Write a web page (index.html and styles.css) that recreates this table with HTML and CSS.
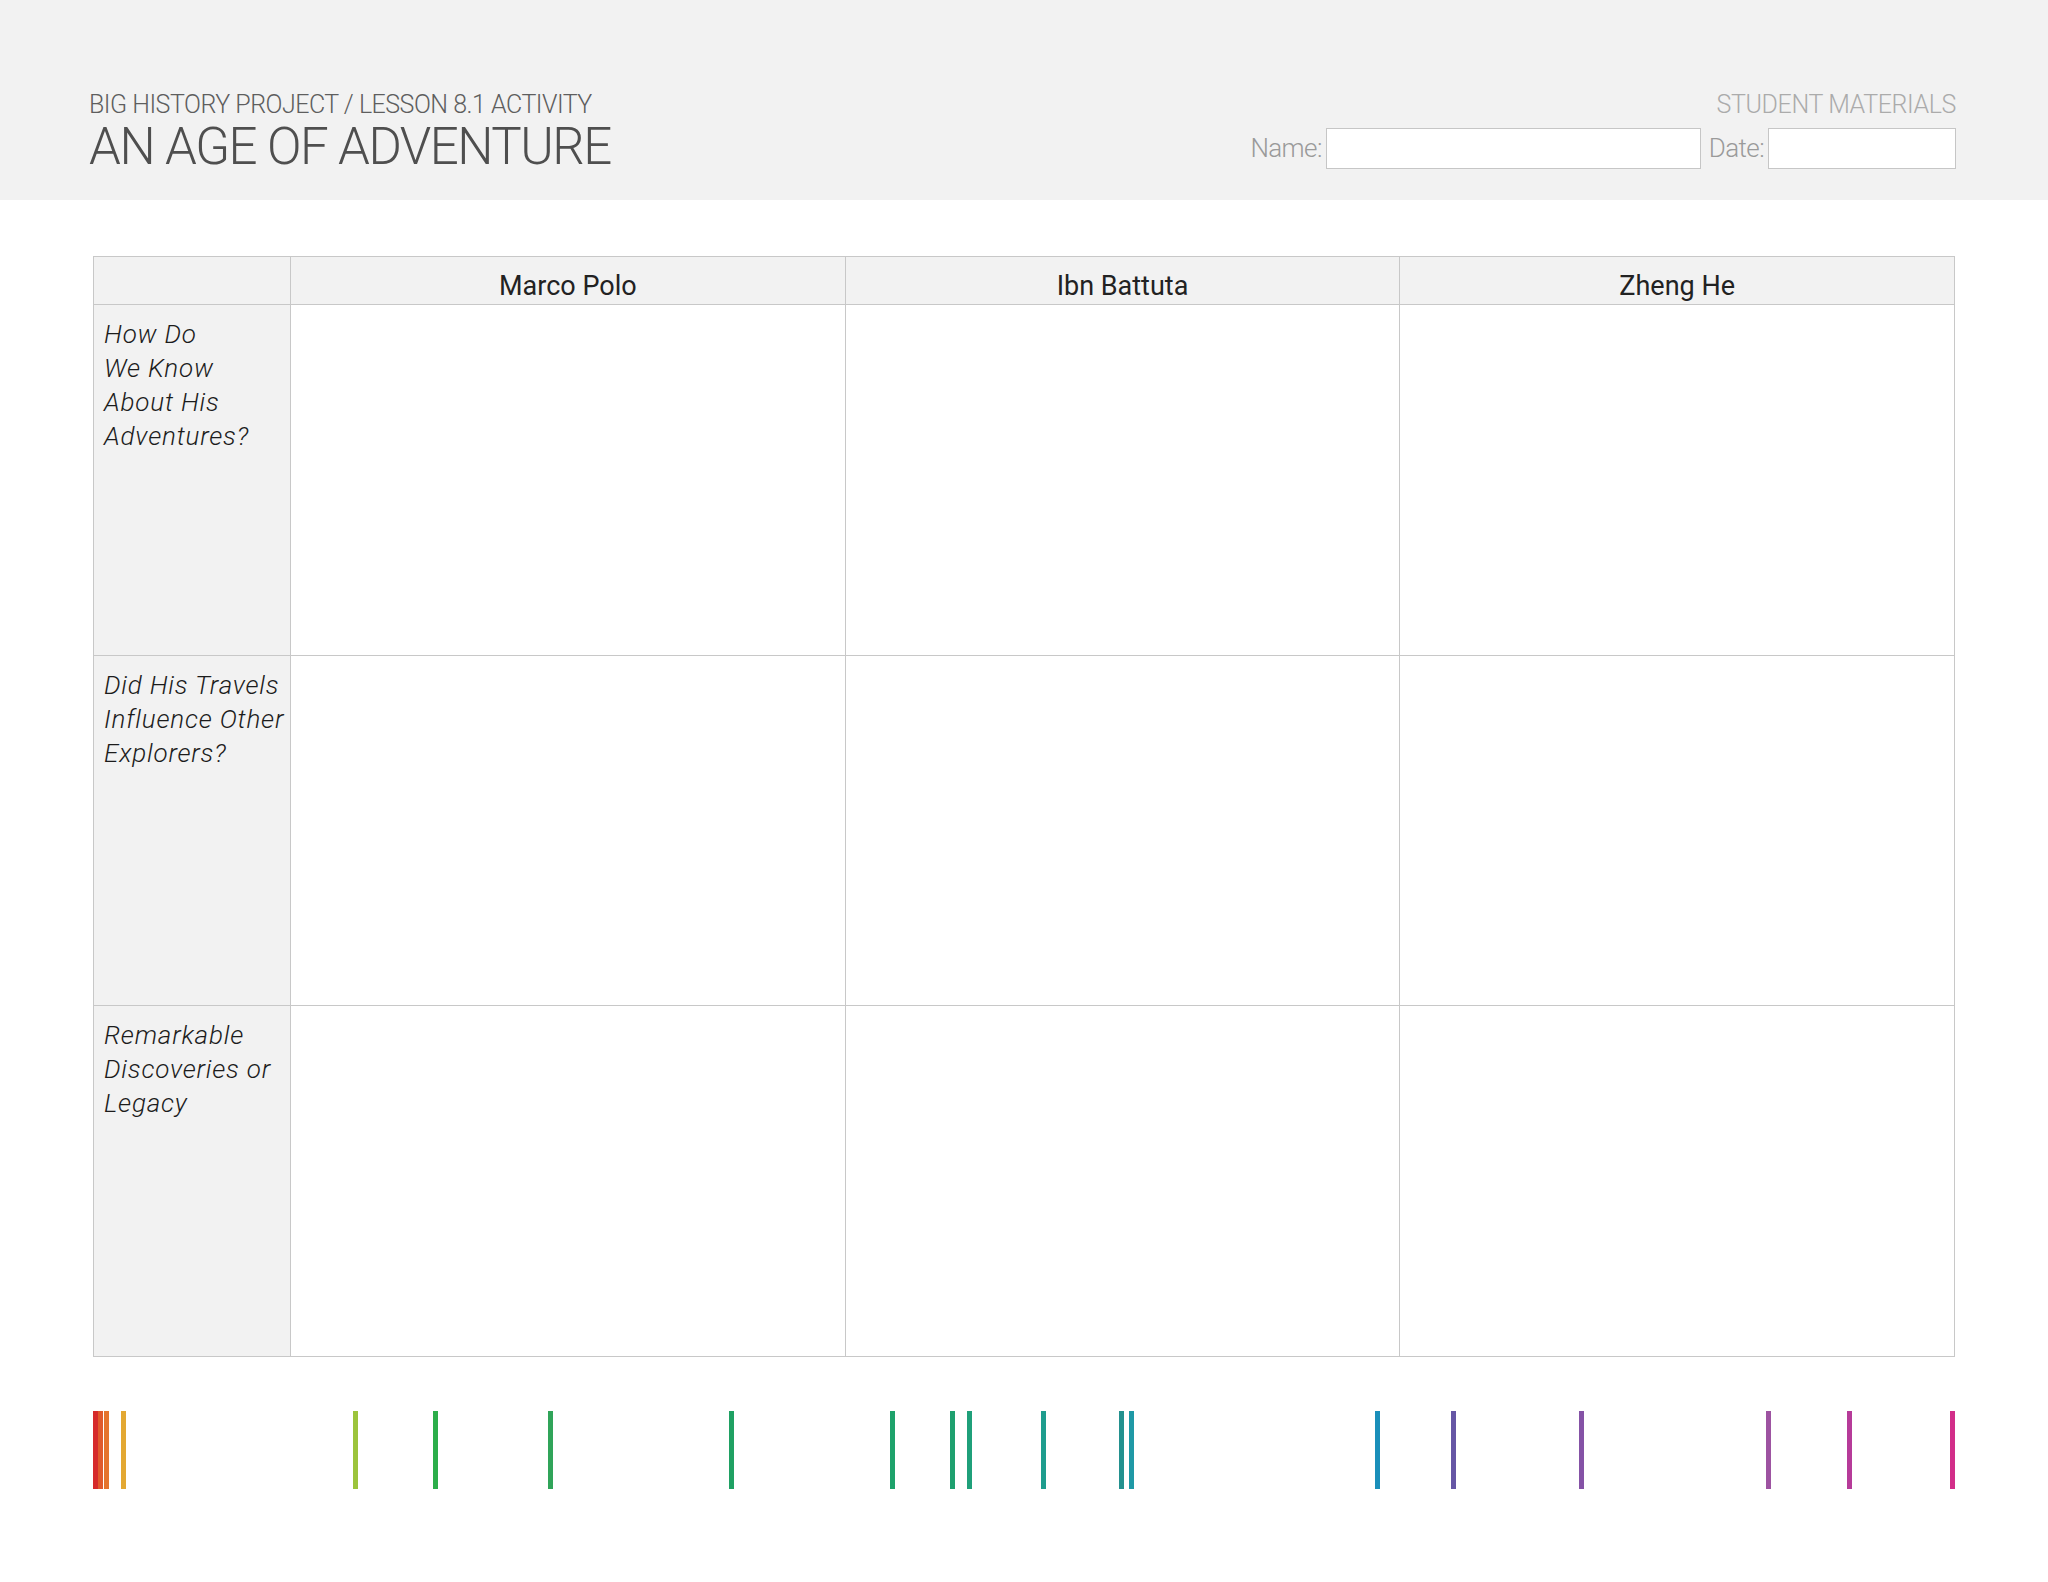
FILE: index.html
```html
<!DOCTYPE html>
<html lang="en">
<head>
<meta charset="utf-8">
<title>An Age of Adventure</title>
<link rel="stylesheet" href="styles.css">
</head>
<body>
<header class="band">
  <div class="band-left">
    <div class="kicker">BIG HISTORY PROJECT / LESSON 8.1 ACTIVITY</div>
    <h1 class="title">AN AGE OF ADVENTURE</h1>
  </div>
  <div class="band-right">
    <div class="materials">STUDENT MATERIALS</div>
    <div class="fields">
      <span class="field-label">Name:</span><span class="field field-name"></span>
      <span class="field-label date-label">Date:</span><span class="field field-date"></span>
    </div>
  </div>
</header>
<main class="sheet">
  <div class="grid">
    <div class="cell head corner"></div>
    <div class="cell head">Marco Polo</div>
    <div class="cell head">Ibn Battuta</div>
    <div class="cell head">Zheng He</div>

    <div class="cell label">How Do<br>We Know<br>About His<br>Adventures?</div>
    <div class="cell"></div>
    <div class="cell"></div>
    <div class="cell"></div>

    <div class="cell label">Did His Travels<br>Influence Other<br>Explorers?</div>
    <div class="cell"></div>
    <div class="cell"></div>
    <div class="cell"></div>

    <div class="cell label">Remarkable<br>Discoveries or<br>Legacy</div>
    <div class="cell"></div>
    <div class="cell"></div>
    <div class="cell"></div>
  </div>
  <div class="timeline">
    <span class="tick" style="left:0px;background:#d62a2b"></span>
    <span class="tick" style="left:5px;background:#e05a2c"></span>
    <span class="tick" style="left:11px;background:#e5742d"></span>
    <span class="tick" style="left:28px;background:#e3a832"></span>
    <span class="tick" style="left:260px;background:#9cc43c"></span>
    <span class="tick" style="left:340px;background:#2cae4a"></span>
    <span class="tick" style="left:455px;background:#30a459"></span>
    <span class="tick" style="left:636px;background:#1fa163"></span>
    <span class="tick" style="left:797px;background:#1ea26b"></span>
    <span class="tick" style="left:857px;background:#1ea06f"></span>
    <span class="tick" style="left:874px;background:#1fa07a"></span>
    <span class="tick" style="left:948px;background:#1e9d8e"></span>
    <span class="tick" style="left:1026px;background:#23918f"></span>
    <span class="tick" style="left:1036px;background:#1f99a6"></span>
    <span class="tick" style="left:1282px;background:#1a8fba"></span>
    <span class="tick" style="left:1358px;background:#6656a5"></span>
    <span class="tick" style="left:1486px;background:#8552a6"></span>
    <span class="tick" style="left:1673px;background:#9d53a1"></span>
    <span class="tick" style="left:1754px;background:#b63b99"></span>
    <span class="tick" style="left:1857px;background:#d22e89"></span>
  </div>
</main>
</body>
</html>
```

FILE: styles.css
```css
html, body {
  margin: 0;
  padding: 0;
  background: #ffffff;
}

body {
  font-family: Roboto, "Noto Sans", "Liberation Sans", sans-serif;
  color: #222;
}

.band {
  box-sizing: border-box;
  height: 200px;
  background: #f2f2f2;
  display: flex;
  justify-content: space-between;
  align-items: flex-start;
  padding: 90px 92px 0 89px;
}

.kicker {
  font-size: 25px;
  font-weight: 300;
  line-height: 30px;
  color: #5e5e5e;
  letter-spacing: -0.5px;
  white-space: nowrap;
}

.title {
  margin: 0;
  font-size: 51px;
  font-weight: 300;
  line-height: 54px;
  color: #4f4f4f;
  letter-spacing: -1.5px;
  white-space: nowrap;
}

.band-right {
  display: flex;
  flex-direction: column;
  align-items: flex-end;
}

.materials {
  font-size: 25px;
  font-weight: 300;
  line-height: 30px;
  color: #ababab;
  letter-spacing: -0.4px;
  white-space: nowrap;
}

.fields {
  display: flex;
  align-items: center;
  height: 41px;
  margin-top: 8px;
}

.field-label {
  font-size: 26px;
  font-weight: 300;
  line-height: 41px;
  color: #9a9a9a;
  letter-spacing: -0.6px;
  margin-right: 4px;
}

.date-label {
  margin-left: 8px;
}

.field {
  box-sizing: border-box;
  height: 41px;
  border: 1px solid #c6c6c6;
  background: #ffffff;
}

.field-name {
  width: 375px;
}

.field-date {
  width: 188px;
}

.sheet {
  padding: 56px 93px 0 93px;
}

.grid {
  display: grid;
  grid-template-columns: 197px repeat(3, 1fr);
  grid-template-rows: 48px 351px 350px 351px;
  border-top: 1px solid #c8c8c8;
  border-left: 1px solid #c8c8c8;
}

.cell {
  box-sizing: border-box;
  border-right: 1px solid #c8c8c8;
  border-bottom: 1px solid #c8c8c8;
  background: #ffffff;
}

.head {
  background: #f2f2f2;
  text-align: center;
  font-size: 27px;
  font-weight: 400;
  line-height: 32px;
  padding-top: 13px;
  color: #222;
}

.label {
  background: #f2f2f2;
  font-size: 26px;
  font-weight: 300;
  font-style: italic;
  line-height: 34px;
  letter-spacing: 0.8px;
  padding: 12px 0 0 10px;
  color: #1c1c1c;
}

.timeline {
  position: relative;
  height: 78px;
  margin-top: 54px;
}

.tick {
  position: absolute;
  top: 0;
  bottom: 0;
  width: 5px;
}
```
